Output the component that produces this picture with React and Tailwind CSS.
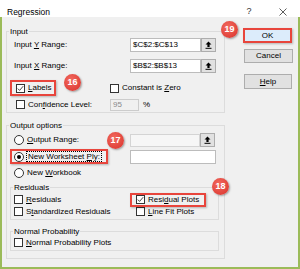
import React from 'react';

// small pieces of the Win10 dialog
function Acc({ children }) {
    return <span className="underline underline-offset-[1px] decoration-[0.8px]">{children}</span>;
}

function Check({ checked }) {
    return (
        <span className="w-[9px] h-[9px] border border-[#333] bg-white shrink-0 flex items-center justify-center">
            {checked && (
                <svg width="7" height="7" viewBox="0 0 7 7">
                    <path d="M0.8 3.6 L2.6 5.4 L6.2 1.2" fill="none" stroke="#333" strokeWidth="0.9" />
                </svg>
            )}
        </span>
    );
}

function Radio({ checked }) {
    return (
        <span className="w-[10px] h-[10px] rounded-full border border-[#333] bg-white shrink-0 flex items-center justify-center">
            {checked && <span className="w-[4px] h-[4px] rounded-full bg-black"></span>}
        </span>
    );
}

function Badge({ n, className }) {
    return (
        <span
            className={`absolute w-[17px] h-[17px] rounded-full bg-[radial-gradient(circle_at_40%_35%,#f26a5f,#d9302a)] shadow-[1px_1px_2px_rgba(0,0,0,0.35)] flex items-center justify-center text-white text-[9px] font-bold leading-none ${className}`}
        >
            {n}
        </span>
    );
}

function CollapseBtn() {
    return (
        <span className="w-[15px] h-[14px] bg-[#e1e1e1] border border-[#adadad] flex items-center justify-center shrink-0">
            <svg width="7" height="8" viewBox="0 0 7 8">
                <path d="M3.5 0.5 L0.5 3.6 H2.4 V6 H4.6 V3.6 H6.5 Z" fill="#000" />
                <rect x="0.5" y="6.8" width="6" height="1" fill="#000" />
            </svg>
        </span>
    );
}

function Field({ value, width = 'w-[71px]' }) {
    return (
        <span className={`${width} h-[14px] bg-white border border-[#bcbcbc] flex items-center pl-[2px] text-[8px] leading-none`}>
            {value}
        </span>
    );
}

const redBox = 'border-2 border-[#e8453c] shadow-[1px_1px_2px_rgba(0,0,0,0.25)]';

export default function App() {
    return (
        <div className="w-[300px] h-[269px] flex flex-col bg-[#f0f0f0] text-black text-[8px] font-['Liberation_Sans',Arial,sans-serif]">
            {/* Title bar */}
            <div className="h-[17px] bg-white flex items-start shrink-0">
                <span className="ml-[7px] mt-[7px] leading-[11px] text-[8.5px]">Regression</span>
                <span className="ml-auto mt-[6px] w-[20px] text-center leading-[11px] text-[9px] text-[#333]">?</span>
                <span className="ml-[14px] mr-[7px] mt-[8px] w-[20px] flex justify-center">
                    <svg width="8" height="8" viewBox="0 0 8 8">
                        <path d="M0.5 0.5 L7.5 7.5 M7.5 0.5 L0.5 7.5" stroke="#333" strokeWidth="0.8" />
                    </svg>
                </span>
            </div>

            {/* Body */}
            <div className="flex-1 flex border-x-2 border-b-2 border-[#9bbb59]">
                {/* Left column */}
                <div className="ml-[4px] w-[219px] shrink-0">
                    <fieldset className="mt-[9px] border border-[#dcdcdc] px-[3px] pb-0">
                        <legend className="px-[1px] -ml-[1px] leading-[11px]">Input</legend>
                        <div className="mt-[1px] h-[14px] flex items-center">
                            <span className="w-[120px] pl-[4px]">Input <Acc>Y</Acc> Range:</span>
                            <Field value="$C$2:$C$13" />
                            <CollapseBtn />
                        </div>
                        <div className="mt-[7px] h-[14px] flex items-center">
                            <span className="w-[120px] pl-[4px]">Input <Acc>X</Acc> Range:</span>
                            <Field value="$B$2:$B$13" />
                            <CollapseBtn />
                        </div>
                        <div className="mt-[7px] h-[16px] flex items-center">
                            <div className={`relative w-[46px] h-[16px] ${redBox} pl-[4px] flex items-center gap-[3px]`}>
                                <Check checked />
                                <span><Acc>L</Acc>abels</span>
                                <Badge n="16" className="left-[52px] top-[-8px]" />
                            </div>
                            <div className="ml-[54px] flex items-center gap-[3px]">
                                <Check />
                                <span>Constant is <Acc>Z</Acc>ero</span>
                            </div>
                        </div>
                        <div className="mt-[1px] h-[15px] flex items-center">
                            <div className="w-[100px] pl-[6px] flex items-center gap-[3px]">
                                <Check />
                                <span>Con<Acc>f</Acc>idence Level:</span>
                            </div>
                            <span className="w-[29px] h-[12px] border border-[#cccccc] bg-[#f0f0f0] text-[#8a8a8a] pl-[2px] flex items-center">95</span>
                            <span className="ml-[4px]">%</span>
                        </div>
                    </fieldset>

                    <fieldset className="mt-[7px] border border-[#dcdcdc] px-[3px] pb-[7px]">
                        <legend className="px-[1px] -ml-[1px] leading-[11px]">Output options</legend>
                        <div className="relative mt-[2px] h-[14px] flex items-center">
                            <div className="w-[120px] pl-[4px] flex items-center gap-[3px]">
                                <Radio />
                                <span><Acc>O</Acc>utput Range:</span>
                            </div>
                            <span className="w-[70px] h-[13px] border border-[#d4d4d4] bg-[#f6f6f6]"></span>
                            <CollapseBtn />
                            <Badge n="17" className="left-[97px] top-[-1px]" />
                        </div>
                        <div className="mt-[2px] h-[15px] flex items-center">
                            <div className={`w-[98px] h-[15px] ${redBox} pl-[2px] flex items-center gap-[2px]`}>
                                <Radio checked />
                                <span className="border border-dotted border-black px-[1px] leading-[9px]">New Worksheet <Acc>P</Acc>ly:</span>
                            </div>
                            <span className="ml-[22px] w-[86px] h-[14px] border border-[#bcbcbc] bg-white"></span>
                        </div>
                        <div className="mt-[2px] h-[14px] pl-[4px] flex items-center gap-[3px]">
                            <Radio />
                            <span>New <Acc>W</Acc>orkbook</span>
                        </div>

                        <fieldset className="mt-[2px] w-[209px] border border-[#dcdcdc] px-[3px] pb-[2px]">
                            <legend className="px-[1px] -ml-[1px] leading-[11px]">Residuals</legend>
                            <div className="h-[13px] flex items-center">
                                <div className="w-[116px] flex items-center gap-[3px]">
                                    <Check />
                                    <span><Acc>R</Acc>esiduals</span>
                                </div>
                                <div className={`relative w-[76px] h-[14px] ${redBox} pl-[4px] flex items-center gap-[3px]`}>
                                    <Check checked />
                                    <span>Resi<Acc>d</Acc>ual Plots</span>
                                    <Badge n="18" className="left-[80px] top-[-17px]" />
                                </div>
                            </div>
                            <div className="h-[11px] flex items-center">
                                <div className="w-[116px] flex items-center gap-[3px]">
                                    <Check />
                                    <span>S<Acc>t</Acc>andardized Residuals</span>
                                </div>
                                <div className="pl-[6px] flex items-center gap-[3px]">
                                    <Check />
                                    <span><Acc>L</Acc>ine Fit Plots</span>
                                </div>
                            </div>
                        </fieldset>

                        <fieldset className="mt-[6px] w-[209px] border border-[#dcdcdc] px-[3px] pb-[2px]">
                            <legend className="px-[1px] -ml-[1px] leading-[11px]">Normal Probability</legend>
                            <div className="h-[11px] flex items-center gap-[3px]">
                                <Check />
                                <span><Acc>N</Acc>ormal Probability Plots</span>
                            </div>
                        </fieldset>
                    </fieldset>
                </div>

                {/* Right column: buttons */}
                <div className="ml-[18px] flex flex-col">
                    <div className={`relative mt-[11px] w-[49px] h-[15px] ${redBox} bg-[#dcecfb] flex items-center justify-center`}>
                        OK
                        <Badge n="19" className="left-[-24px] top-[-9px]" />
                    </div>
                    <div className="mt-[6px] ml-[1px] w-[49px] h-[14px] bg-[#e1e1e1] border border-[#adadad] flex items-center justify-center">
                        Cancel
                    </div>
                    <div className="mt-[11px] ml-[1px] w-[48px] h-[15px] bg-[#e1e1e1] border border-[#adadad] flex items-center justify-center">
                        <span><Acc>H</Acc>elp</span>
                    </div>
                </div>
            </div>
        </div>
    );
}
